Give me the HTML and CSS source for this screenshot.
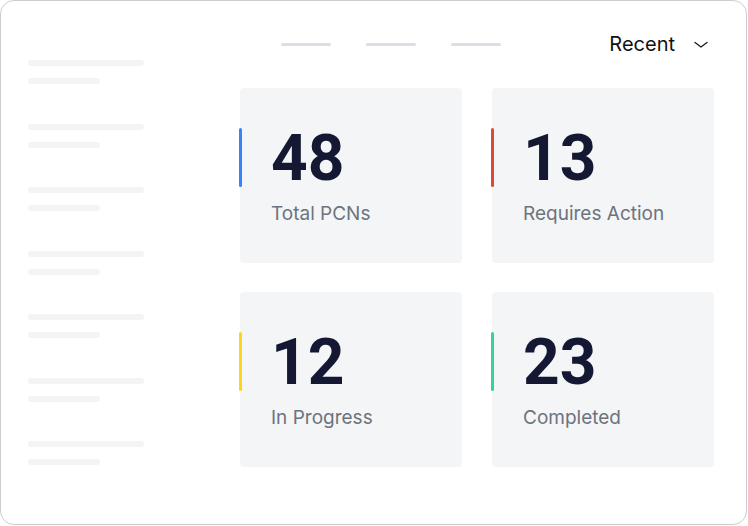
FILE: index.html
```html
<!DOCTYPE html>
<html lang="en">
<head>
  <meta charset="UTF-8">
  <meta name="viewport" content="width=device-width, initial-scale=1.0">
  <title>PCN Overview</title>
  <link rel="stylesheet" href="styles.css">
</head>
<body>
  <div class="frame">
    <!-- placeholder sidebar -->
    <div class="sidebar">
      <div class="nav-item"><span class="line long"></span><span class="line short"></span></div>
      <div class="nav-item"><span class="line long"></span><span class="line short"></span></div>
      <div class="nav-item"><span class="line long"></span><span class="line short"></span></div>
      <div class="nav-item"><span class="line long"></span><span class="line short"></span></div>
      <div class="nav-item"><span class="line long"></span><span class="line short"></span></div>
      <div class="nav-item"><span class="line long"></span><span class="line short"></span></div>
      <div class="nav-item"><span class="line long"></span><span class="line short"></span></div>
    </div>

    <div class="main">
      <div class="topbar">
        <div class="tabs">
          <span class="tab"></span>
          <span class="tab"></span>
          <span class="tab"></span>
        </div>
        <div class="dropdown">
          <span>Recent</span>
          <svg width="14" height="8" viewBox="0 0 14 8"><polyline points="1,1.5 7,6 13,1.5" fill="none" stroke="#1f2328" stroke-width="1.4" stroke-linecap="round" stroke-linejoin="round"/></svg>
        </div>
      </div>

      <!-- stat cards -->
      <div class="cards">
        <div class="card">
          <span class="accent blue"></span>
          <div class="stat">
            <div class="value">48</div>
            <div class="label">Total PCNs</div>
          </div>
        </div>
        <div class="card">
          <span class="accent red"></span>
          <div class="stat">
            <div class="value">13</div>
            <div class="label">Requires Action</div>
          </div>
        </div>
        <div class="card">
          <span class="accent yellow"></span>
          <div class="stat">
            <div class="value">12</div>
            <div class="label">In Progress</div>
          </div>
        </div>
        <div class="card">
          <span class="accent green"></span>
          <div class="stat">
            <div class="value">23</div>
            <div class="label">Completed</div>
          </div>
        </div>
      </div>
    </div>
  </div>
</body>
</html>
```

FILE: styles.css
```css
body {
  margin: 0;
  font-family: Inter, "Noto Sans", sans-serif;
  background: #ffffff;
}
.frame {
  box-sizing: border-box;
  width: 747px;
  height: 525px;
  border: 1px solid #cdcdcd;
  border-radius: 14px;
  display: flex;
  background: #ffffff;
}
.sidebar {
  width: 239px;
  flex-shrink: 0;
  padding: 59px 0 0 27px;
  box-sizing: border-box;
  display: flex;
  flex-direction: column;
  gap: 39.5px;
}
.nav-item {
  display: flex;
  flex-direction: column;
  gap: 12px;
}
.line {
  display: block;
  height: 6px;
  border-radius: 3px;
  background: #f3f4f5;
}
.line.long {
  width: 116px;
}
.line.short {
  width: 72px;
}
.main {
  width: 474px;
  flex-shrink: 0;
}
.topbar {
  height: 87px;
  display: flex;
  align-items: center;
  padding-right: 6px;
}
.tabs {
  display: flex;
  gap: 35px;
  margin-left: 41px;
}
.tab {
  display: block;
  width: 50px;
  height: 3px;
  border-radius: 2px;
  background: #d9dfe4;
}
.dropdown {
  margin-left: auto;
  display: flex;
  align-items: center;
  gap: 19px;
  font-size: 20px;
  color: #111111;
  margin-top: -2px;
}
.dropdown svg {
  margin-top: 2px;
}
.cards {
  display: grid;
  grid-template-columns: 222px 222px;
  grid-auto-rows: 175px;
  column-gap: 30px;
  row-gap: 29px;
}
.card {
  background: #f3f5f7;
  border-radius: 4px;
  display: flex;
  align-items: flex-start;
  padding-top: 40px;
  box-sizing: border-box;
}
.accent {
  display: block;
  width: 3px;
  height: 59px;
  border-radius: 2px;
  margin-left: -1px;
}
.accent.blue {
  background: #3b82f6;
}
.accent.red {
  background: #dc4a35;
}
.accent.yellow {
  background: #f9d71c;
}
.accent.green {
  background: #34d399;
}
.stat {
  margin-left: 29px;
}
.value {
  font-family: Roboto, Inter, sans-serif;
  font-size: 64px;
  font-weight: 700;
  line-height: 1;
  color: #141833;
  margin-top: -1px;
}
.label {
  margin-top: 11px;
  font-size: 19px;
  color: #6d737d;
}
```
